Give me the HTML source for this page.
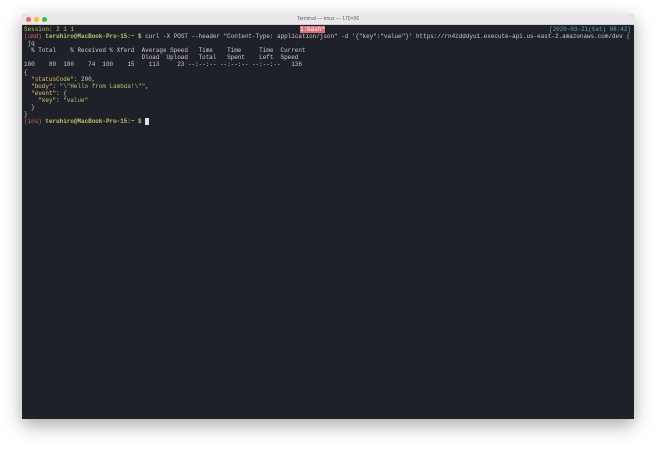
<!DOCTYPE html>
<html><head><style>
body{margin:0;width:656px;height:449px;background:#fff;overflow:hidden;position:relative}
.win{position:absolute;left:22px;top:14px;width:612px;height:405px;background:#1f2128;box-shadow:0 6px 18px rgba(0,0,0,.35);border-radius:4px 4px 0 0;overflow:hidden}
.tb{height:10px;background:#e9e7e9;border-bottom:1px solid #cfcfcf;position:relative;font:5px "Liberation Sans",sans-serif;color:#666;text-align:center;line-height:10px}
.d{position:absolute;top:2.5px;width:5px;height:5px;border-radius:50%}
pre{margin:0;padding:1px 2px;font:5.95px/7.1px "Liberation Mono",monospace;color:#c8cbd0;white-space:pre;position:relative}
.y{color:#c6c55b}.r{color:#d46a5a}.g{color:#b8c46a;font-weight:bold}.c{color:#5fa7b8}.k{color:#d9c66a}.s{color:#a6c46e}.b{background:#d7707a;color:#fff}
.ab{position:absolute;top:1px}
</style></head><body>
<div class="win"><div class="tb"><span class="d" style="left:4px;background:#fd5f57"></span><span class="d" style="left:12px;background:#febc2e"></span><span class="d" style="left:20px;background:#28c840"></span>Terminal — tmux — 170×56</div>
<pre><span class="ab b" style="left:278px">1:bash*</span><span class="ab c" style="right:3px">[2020-03-21(Sat) 08:42]</span><span class="y">Session: 2 1 1</span>
<span class="r">(cmd)</span> <span class="g">teruhiro@MacBook-Pro-15:~ $</span> curl -X POST --header "Content-Type: application/json" -d '{"key":"value"}' https://rn4zdddyu1.execute-api.us-east-2.amazonaws.com/dev |
 jq
  % Total    % Received % Xferd  Average Speed   Time    Time     Time  Current
                                 Dload  Upload   Total   Spent    Left  Speed
100    89  100    74  100    15    113     23 --:--:-- --:--:-- --:--:--   136
{
  <span class="k">"statusCode"</span>: 200,
  <span class="k">"body"</span>: <span class="s">"\"Hello from Lambda!\""</span>,
  <span class="k">"event"</span>: {
    <span class="k">"key"</span>: <span class="s">"value"</span>
  }
}
<span class="r">(ins)</span> <span class="g">teruhiro@MacBook-Pro-15:~ $</span> <span style="background:#e0e0e0">&nbsp;</span></pre>
</div>
</body></html>
